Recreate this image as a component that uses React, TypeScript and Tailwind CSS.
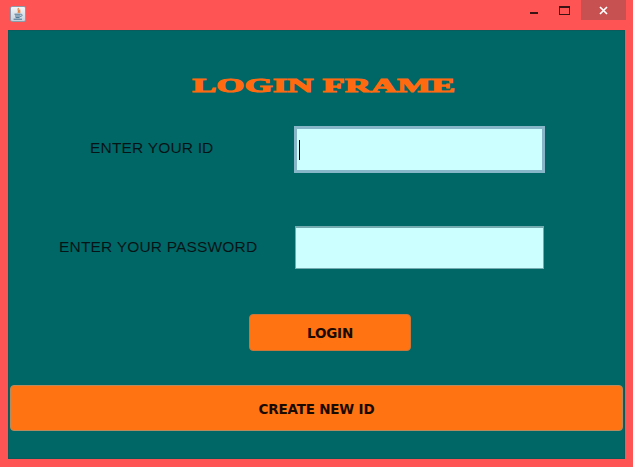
function JavaIcon() {
  return (
    <div className="flex h-[16px] w-[16px] items-center justify-center rounded-[2px] border border-[#8d9aa8] bg-gradient-to-b from-[#f4f6f8] to-[#c6d0dc]">
      <svg width="14" height="14" viewBox="0 0 14 14" fill="none">
        <path d="M7.5 1C6 3 8.5 3.6 7 6M9 2.5C8 3.6 9.4 4.4 8.6 6" stroke="#e2762a" strokeWidth="1.1" />
        <path d="M3.5 7.2h6.2M4 9h5.4M4.6 10.6h4" stroke="#44708f" strokeWidth="1" />
        <path d="M9.8 7.4c2 -.4 2 1.7 -.6 2.2" stroke="#44708f" strokeWidth=".8" />
        <path d="M2.6 12.2h8.4" stroke="#44708f" strokeWidth="1" />
      </svg>
    </div>
  );
}

function TitleBar() {
  return (
    <div className="flex h-[30px] shrink-0 items-start justify-between pl-[10px] pr-[7px]">
      <div className="pt-[6px]">
        <JavaIcon />
      </div>
      <div className="flex items-start">
        <div className="mt-[12px] mr-[21px] h-[2px] w-[8px] bg-[#3a1414]" />
        <div className="mt-[6px] mr-[11px] h-[9px] w-[11px] border border-t-2 border-[#3a1414]" />
        <div className="flex h-[20px] w-[45px] items-center justify-center bg-[#c75050]">
          <svg width="9" height="9" viewBox="0 0 9 9">
            <path d="M1 1l7 7M8 1l-7 7" stroke="#fff" strokeWidth="1.7" />
          </svg>
        </div>
      </div>
    </div>
  );
}

export default function App() {
  return (
    <div className="flex h-[467px] w-[633px] flex-col overflow-hidden bg-[#ff5454]">
      <TitleBar />
      <div className="mx-[8px] mb-[8px] flex flex-1 flex-col border border-[#0b5a5c] bg-[#006666]">
        <div className="mt-[44px] flex h-[20px] items-center justify-center pl-[15px]">
          <h1 className="origin-center scale-x-[1.88] font-['Liberation_Serif',serif] text-[19px] leading-none font-bold tracking-[0.2px] whitespace-nowrap text-[#ff6a10] [-webkit-text-stroke:1.1px_#ff6a10]">
            LOGIN FRAME
          </h1>
        </div>

        <div className="mt-[31px] flex h-[47px] items-start">
          <label className="mt-[12px] ml-[81px] w-[204px] font-['Liberation_Sans',sans-serif] text-[15.5px] leading-[20px] tracking-[0.18px] text-[#051416]">
            ENTER YOUR ID
          </label>
          <div className="flex h-[47px] w-[251px] items-center border-[3px] border-[#86b6c8] bg-[#ccffff] pl-[2px]">
            <div className="h-[20px] w-px bg-black" />
          </div>
        </div>

        <div className="mt-[53px] flex h-[43px] items-start">
          <label className="mt-[11px] ml-[50px] w-[236px] font-['Liberation_Sans',sans-serif] text-[15.5px] leading-[20px] tracking-[0.18px] text-[#051416]">
            ENTER YOUR PASSWORD
          </label>
          <div className="h-[43px] w-[249px] border border-t-2 border-[#74abb0] bg-[#ccffff]" />
        </div>

        <button className="mt-[45px] ml-[240px] h-[37px] w-[162px] rounded-[4px] border border-[#c9763a] bg-[#ff7313] pt-[2px] font-['DejaVu_Sans',sans-serif] text-[13.5px] font-bold tracking-[-0.2px] text-[#1a0a00]">
          LOGIN
        </button>

        <button className="mx-[1px] mt-[34px] h-[46px] rounded-[4px] border border-[#b58a5e] bg-[#ff7313] pt-[2px] font-['DejaVu_Sans',sans-serif] text-[13.5px] font-bold tracking-[-0.2px] text-[#1a0a00]">
          CREATE NEW ID
        </button>
      </div>
    </div>
  );
}
